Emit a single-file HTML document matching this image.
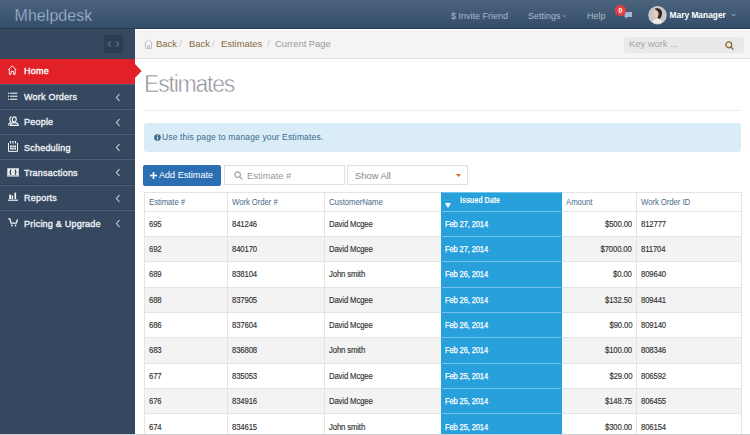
<!DOCTYPE html>
<html><head><meta charset="utf-8">
<style>
*{margin:0;padding:0;box-sizing:border-box}
html,body{width:750px;height:435px;overflow:hidden;background:#fff;font-family:"Liberation Sans",sans-serif;position:relative}
.abs{position:absolute}
#nav{left:0;top:0;width:750px;height:29px;background:linear-gradient(#4b637d,#344d69);border-bottom:1px solid #243850}
#logo{left:14.5px;top:6.5px;font-size:16px;color:#a9c0dc;-webkit-text-stroke:0.35px #425b78;letter-spacing:0.05px;line-height:18px}
.nt{top:10.8px;font-size:9px;color:#a9b9cc;line-height:11px;white-space:nowrap}
#side{left:0;top:29px;width:135px;height:406px;background:#35485f}
#toggle{left:104px;top:35px;width:18.5px;height:18px;background:#2d3e52}
.si{left:0;width:135px;height:25.3px}
.sep{position:absolute;left:0;top:24.3px;width:135px;height:1px;background:#4b5f76;box-shadow:0 -1px 0 #2f4157}
.st{position:absolute;left:24px;top:7.5px;font-size:9px;font-weight:normal;-webkit-text-stroke:0.35px #eef2f6;color:#eef2f6;letter-spacing:0.22px;line-height:11px;white-space:nowrap}
.chev{position:absolute;left:114.5px;top:8px;width:6px;height:9px}
#home{left:0;top:59px;width:135px;height:24.5px;background:#e12127}
#bc{left:135px;top:29px;width:615px;height:30px;background:#f4f4f4;border-top:1px solid #fff;border-bottom:1px solid #e2e2e2}
.bt{top:38px;font-size:9.4px;line-height:12px;color:#86693f;white-space:nowrap}
.sl{color:#c8c8c8}
#title{left:144px;top:71px;font-size:23px;line-height:26px;color:#8e8e9a;letter-spacing:-1.2px;-webkit-text-stroke:0.5px #fff}
#hr{left:144px;top:110px;width:597px;height:1px;background:#eeeeee}
#alert{left:144px;top:123px;width:597px;height:29px;background:#d9ecf7;border-radius:3px}
#alert span{position:absolute;left:18px;top:9px;font-size:8.5px;letter-spacing:0.15px;line-height:11px;color:#3c6b8e;white-space:nowrap}
#btn{left:143px;top:165px;width:78px;height:21px;background:#2c6eb3;border-radius:2px}
#btn span{position:absolute;left:16px;top:5px;font-size:9.1px;line-height:11px;color:#fff;white-space:nowrap}
#srch{left:224px;top:165px;width:121px;height:20px;border:1px solid #e0e0e0;background:#fff}
#sel{left:347px;top:165px;width:121px;height:20px;border:1px solid #e0e0e0;background:#fff}
.it{position:absolute;top:4px;font-size:9.4px;line-height:11px;color:#999;white-space:nowrap}
table{position:absolute;left:144px;top:191.6px;width:597px;border-collapse:collapse;table-layout:fixed}
td,th{border:1px solid #e4e4e4;font-size:8.6px;letter-spacing:-0.15px;white-space:nowrap;padding:0 4px 0 4.2px;text-align:left;font-weight:normal}
th{height:19px;color:#4a6b8c;-webkit-text-stroke:0;font-size:8.7px;letter-spacing:-0.1px}
td{height:25.35px;color:#333;-webkit-text-stroke:0.15px #333}
tr.g td{background:#f3f3f3}
tr td.b{background:#27a0dc}
td.b,th.b{background:#27a0dc;color:#fff;font-weight:bold;border-top:1px solid #72c2ea;border-bottom:1px solid #72c2ea;border-left:1px double #27a0dc;border-right:1px double #27a0dc;-webkit-text-stroke:0;padding-left:4px}
td.r{text-align:right}
td.b{font-size:8.7px;font-weight:normal;-webkit-text-stroke:0.25px #fff;padding-left:2.9px}
td.b i{transform:scaleX(.87)}
td i,th i{font-style:normal;display:inline-block;transform:scaleX(.9);transform-origin:0 50%}
td.r i{transform-origin:100% 50%}
#bottom{left:0;top:434px;width:750px;height:1px;background:#cfcfcf}
</style></head><body>
<div id="nav" class="abs"></div>
<div id="logo" class="abs">Mhelpdesk</div>
<div class="abs nt" style="left:451px">$ Invite Friend</div>
<div class="abs nt" style="left:528px">Settings</div><svg class="abs" style="left:561.5px;top:13.5px" width="5" height="4" viewBox="0 0 5 4" fill="none" stroke="#8ea3bb" stroke-width="0.8"><path d="M0.5 0.8 L2.5 3 L4.5 0.8"/></svg>
<div class="abs nt" style="left:587px">Help</div>
<svg class="abs" style="left:623.8px;top:11.8px" width="8.5" height="7.5" viewBox="0 0 8.5 7.5"><path d="M0.5 0 H8.5 V5 H3.5 L1.5 7 V5 H0.5 Z" fill="#a3b6d4"/></svg><div class="abs" style="left:614.8px;top:4.6px;width:11.3px;height:11.3px;border-radius:50%;background:#e0413f;color:#fff;font-size:7px;line-height:11.5px;text-align:center;font-weight:bold">0</div>
<div class="abs" style="left:669.5px;top:9.5px;font-size:8.4px;font-weight:bold;color:#fff;line-height:11px">Mary Manager</div><svg class="abs" style="left:730.5px;top:12.5px" width="5" height="4" viewBox="0 0 5 4" fill="none" stroke="#b8c6d6" stroke-width="0.8"><path d="M0.5 0.8 L2.5 3 L4.5 0.8"/></svg>
<svg class="abs" style="left:648px;top:6px" width="19" height="19" viewBox="0 0 19 19"><defs><clipPath id="cp"><circle cx="9.5" cy="9.3" r="8.4"/></clipPath></defs><circle cx="9.5" cy="9.3" r="9.2" fill="#d4d0d0"/><g clip-path="url(#cp)"><rect width="19" height="19" fill="#cdc8c6"/><path d="M7 2.5 C10 1.5 13.5 2.5 14 6 C14.3 9 13 12 11.5 13 L9.5 12 L10.5 8 L8 5 Z" fill="#2f2523"/><path d="M6 4.5 C8 3.5 10 4.5 10.5 7 C10.8 9.5 9.8 11.5 8 12 C6.5 12 5.5 10 5.5 8 Z" fill="#e3cdbd"/><path d="M3 19 C4 15 6.5 12.5 9.5 12.5 C12.5 12.5 14.5 15 15.5 19 Z" fill="#efecea"/></g></svg>

<div id="side" class="abs"></div><div class="abs" style="left:0;top:84px;width:135px;height:1px;background:#4a5e75"></div>
<div id="toggle" class="abs"><svg style="position:absolute;left:2px;top:5.5px" width="15" height="7" viewBox="0 0 15 7" fill="none" stroke="#52667d" stroke-width="1.4"><path d="M4.8 0.6 L2.3 3.3 L4.8 6 M10.2 0.6 L12.7 3.3 L10.2 6"/></svg></div>
<div id="home" class="abs"><svg style="position:absolute;left:8px;top:6px" width="9" height="10" viewBox="0 0 9 10" fill="none" stroke="#fff" stroke-width="0.9" stroke-linejoin="miter"><path d="M0.3 4.8 L4.25 0.7 L8.2 4.8"/><path d="M1.3 4 V9.3 H3 V6.4 H5.5 V9.3 H7.2 V4"/></svg><span class="st" style="top:7px;color:#fff;-webkit-text-stroke:0.35px #fff">Home</span><svg style="position:absolute;left:134.5px;top:5.3px" width="7" height="14" viewBox="0 0 7 14"><path d="M0 0 L6.6 7 L0 14 Z" fill="#e12127"/></svg></div>
<div class="abs si" style="top:84.5px"><svg class="ic" style="position:absolute;top:7px;left:8px" width="10" height="8.5" viewBox="0 0 11 9" fill="#fff"><rect x="0" y="0.5" width="1.3" height="1.3"/><rect x="2.3" y="0.6" width="8" height="1.1"/><rect x="0" y="3.8" width="1.3" height="1.3"/><rect x="2.3" y="3.9" width="8" height="1.1"/><rect x="0" y="7.1" width="1.3" height="1.3"/><rect x="2.3" y="7.2" width="8" height="1.1"/></svg><span class="st">Work Orders</span><svg class="chev" viewBox="0 0 6 9" fill="none" stroke="#c9d3de" stroke-width="1.1"><path d="M4.5 1 L1.5 4.5 L4.5 8"/></svg><div class="sep"></div></div>
<div class="abs si" style="top:109.8px"><svg class="ic" style="position:absolute;top:6px;left:8px" width="11" height="10" viewBox="0 0 11 10" fill="none" stroke="#f2f5f8" stroke-width="1.2"><path d="M3.5 0.9 C2 0.9 1.7 2.5 1.9 4 C2.1 5.2 2.7 5.9 3.3 6"/><path d="M0.6 9.4 C0.7 7.5 1.4 6.7 2.8 6.3"/><ellipse cx="6.3" cy="3.4" rx="1.9" ry="2.6"/><path d="M2.4 9.4 C2.6 7.3 4 6.6 6.3 6.6 C8.6 6.6 10 7.3 10.3 9.4 Z"/></svg><span class="st">People</span><svg class="chev" viewBox="0 0 6 9" fill="none" stroke="#c9d3de" stroke-width="1.1"><path d="M4.5 1 L1.5 4.5 L4.5 8"/></svg><div class="sep"></div></div>
<div class="abs si" style="top:135.1px"><svg class="ic" style="position:absolute;top:5.8px;left:8px" width="10" height="11" viewBox="0 0 10 11" fill="none" stroke="#f2f5f8" stroke-width="1"><path d="M0.5 2 V10.4 H9.5 V2"/><path d="M2.5 0 V2.5 M5 0 V2.5 M7.5 0 V2.5" stroke-width="1.2"/><rect x="2" y="4.5" width="6" height="4" fill="#f2f5f8" stroke="none"/><path d="M4 4.5 V8.5 M6 4.5 V8.5 M2 6.5 H8" stroke="#34475e" stroke-width="0.5"/></svg><span class="st">Scheduling</span><svg class="chev" viewBox="0 0 6 9" fill="none" stroke="#c9d3de" stroke-width="1.1"><path d="M4.5 1 L1.5 4.5 L4.5 8"/></svg><div class="sep"></div></div>
<div class="abs si" style="top:160.4px"><svg class="ic" style="position:absolute;top:7.5px;left:7px" width="12" height="9" viewBox="0 0 12 9"><rect x="0" y="0" width="12" height="8.5" fill="#f2f5f8"/><rect x="0.8" y="0.8" width="10.4" height="6.9" fill="#f2f5f8" stroke="#34475e" stroke-width="0.3"/><path d="M4.2 1.8 C2.8 2.6 2.8 5.9 4.2 6.7 M7.8 1.8 C9.2 2.6 9.2 5.9 7.8 6.7" fill="none" stroke="#2a3a50" stroke-width="1.3"/><circle cx="6" cy="4.25" r="1" fill="#b8c4d0"/></svg><span class="st">Transactions</span><svg class="chev" viewBox="0 0 6 9" fill="none" stroke="#c9d3de" stroke-width="1.1"><path d="M4.5 1 L1.5 4.5 L4.5 8"/></svg><div class="sep"></div></div>
<div class="abs si" style="top:185.7px"><svg class="ic" style="position:absolute;top:6.5px;left:8px" width="10" height="9" viewBox="0 0 10 9" fill="#f2f5f8"><rect x="0" y="7.6" width="10" height="1.2"/><rect x="1.2" y="2.6" width="1.8" height="4.4"/><rect x="3.6" y="3.4" width="1.5" height="3.6"/><rect x="6.5" y="0.6" width="1.6" height="6.4"/></svg><span class="st">Reports</span><svg class="chev" viewBox="0 0 6 9" fill="none" stroke="#c9d3de" stroke-width="1.1"><path d="M4.5 1 L1.5 4.5 L4.5 8"/></svg><div class="sep"></div></div>
<div class="abs si" style="top:211px"><svg class="ic" style="position:absolute;top:7px;left:8px" width="10" height="9" viewBox="0 0 10 9"><path d="M0.2 0.9 H1.9 L3.1 5.1 H8.3 L9.6 1.3" fill="none" stroke="#f2f5f8" stroke-width="1.3"/><rect x="3.2" y="6.6" width="1.5" height="1.8" fill="#f2f5f8"/><rect x="6.8" y="6.6" width="1.5" height="1.8" fill="#f2f5f8"/></svg><span class="st">Pricing &amp; Upgrade</span><svg class="chev" viewBox="0 0 6 9" fill="none" stroke="#c9d3de" stroke-width="1.1"><path d="M4.5 1 L1.5 4.5 L4.5 8"/></svg></div>


<div id="bc" class="abs"></div>
<svg class="abs" style="left:144px;top:38.5px" width="9" height="10" viewBox="0 0 9 10" fill="none" stroke="#b9b9b9" stroke-width="0.9"><path d="M0.6 4.6 L4.5 0.8 L8.4 4.6 M1.5 3.8 V9.4 H7.5 V3.8 M3.6 9.4 V6.6 H5.4 V9.4"/></svg><div class="abs bt" style="left:156px">Back</div>
<div class="abs bt sl" style="left:179px">/</div>
<div class="abs bt" style="left:189px">Back</div>
<div class="abs bt sl" style="left:212px">/</div>
<div class="abs bt" style="left:221px">Estimates</div>
<div class="abs bt sl" style="left:267px">/</div>
<div class="abs bt" style="left:275px;color:#999">Current Page</div>
<div class="abs" style="left:624px;top:36.5px;width:120px;height:16.5px;background:#e9e9e9;border-radius:3px"></div>
<div class="abs bt" style="left:629px;color:#a5a5a5">Key work ...</div><svg class="abs" style="left:725px;top:40.5px" width="9" height="9" viewBox="0 0 9 9" fill="none" stroke="#8a6a3c" stroke-width="1.4"><circle cx="3.8" cy="3.8" r="2.9"/><path d="M6 6 L8.4 8.4"/></svg>

<div id="title" class="abs">Estimates</div>
<div id="hr" class="abs"></div>
<div id="alert" class="abs"><svg style="position:absolute;left:9.5px;top:10.5px" width="7" height="7" viewBox="0 0 7 7"><circle cx="3.5" cy="3.5" r="3.3" fill="#3c6b8e"/><rect x="3" y="3" width="1.1" height="2.6" fill="#d9ecf7"/><rect x="3" y="1.4" width="1.1" height="1" fill="#d9ecf7"/></svg><span>Use this page to manage your Estimates.</span></div>
<div id="btn" class="abs"><svg style="position:absolute;left:7px;top:7px" width="7" height="7" viewBox="0 0 7 7" fill="#fff"><rect x="2.7" y="0" width="1.6" height="7"/><rect x="0" y="2.7" width="7" height="1.6"/></svg><span>Add Estimate</span></div>
<div id="srch" class="abs"><svg style="position:absolute;left:8.5px;top:5px" width="9" height="9" viewBox="0 0 9 9" fill="none" stroke="#a0a0a0" stroke-width="1.2"><circle cx="3.6" cy="3.6" r="2.8"/><path d="M5.7 5.7 L8.3 8.3"/></svg><span class="it" style="left:22px">Estimate #</span></div>
<div id="sel" class="abs"><span class="it" style="left:7px;color:#888">Show All</span><svg style="position:absolute;left:108px;top:8px" width="5" height="3" viewBox="0 0 5 3"><path d="M0 0 H5 L2.5 3 Z" fill="#d2691e"/></svg></div>

<table>
<colgroup><col style="width:83px"><col style="width:97px"><col style="width:117px"><col style="width:119.5px"><col style="width:75.5px"><col style="width:105px"></colgroup>
<tr><th><i>Estimate #</i></th><th><i>Work Order #</i></th><th><i>CustomerName</i></th><th class="b" style="position:relative"><svg style="position:absolute;left:3px;top:10.3px" width="6" height="5" viewBox="0 0 6 5"><path d="M0 0 H6 L3 5 Z" fill="#fff"/></svg><i style="position:relative;top:-1.8px;left:14px;font-size:8.4px;transform:scaleX(.87)">Issued Date</i></th><th><i>Amount</i></th><th><i>Work Order ID</i></th></tr>
<tr><td><i>695</i></td><td><i>841246</i></td><td><i>David Mcgee</i></td><td class="b"><i>Feb 27, 2014</i></td><td class="r"><i>$500.00</i></td><td><i>812777</i></td></tr>
<tr class="g"><td><i>692</i></td><td><i>840170</i></td><td><i>David Mcgee</i></td><td class="b"><i>Feb 27, 2014</i></td><td class="r"><i>$7000.00</i></td><td><i>811704</i></td></tr>
<tr><td><i>689</i></td><td><i>838104</i></td><td><i>John smith</i></td><td class="b"><i>Feb 26, 2014</i></td><td class="r"><i>$0.00</i></td><td><i>809640</i></td></tr>
<tr class="g"><td><i>688</i></td><td><i>837905</i></td><td><i>David Mcgee</i></td><td class="b"><i>Feb 26, 2014</i></td><td class="r"><i>$132.50</i></td><td><i>809441</i></td></tr>
<tr><td><i>686</i></td><td><i>837604</i></td><td><i>David Mcgee</i></td><td class="b"><i>Feb 26, 2014</i></td><td class="r"><i>$90.00</i></td><td><i>809140</i></td></tr>
<tr class="g"><td><i>683</i></td><td><i>836808</i></td><td><i>John smith</i></td><td class="b"><i>Feb 26, 2014</i></td><td class="r"><i>$100.00</i></td><td><i>808346</i></td></tr>
<tr><td><i>677</i></td><td><i>835053</i></td><td><i>David Mcgee</i></td><td class="b"><i>Feb 25, 2014</i></td><td class="r"><i>$29.00</i></td><td><i>806592</i></td></tr>
<tr class="g"><td><i>676</i></td><td><i>834916</i></td><td><i>David Mcgee</i></td><td class="b"><i>Feb 25, 2014</i></td><td class="r"><i>$148.75</i></td><td><i>806455</i></td></tr>
<tr><td><i>674</i></td><td><i>834615</i></td><td><i>John smith</i></td><td class="b"><i>Feb 25, 2014</i></td><td class="r"><i>$300.00</i></td><td><i>806154</i></td></tr>
</table>
<div id="bottom" class="abs"></div>
</body></html>
